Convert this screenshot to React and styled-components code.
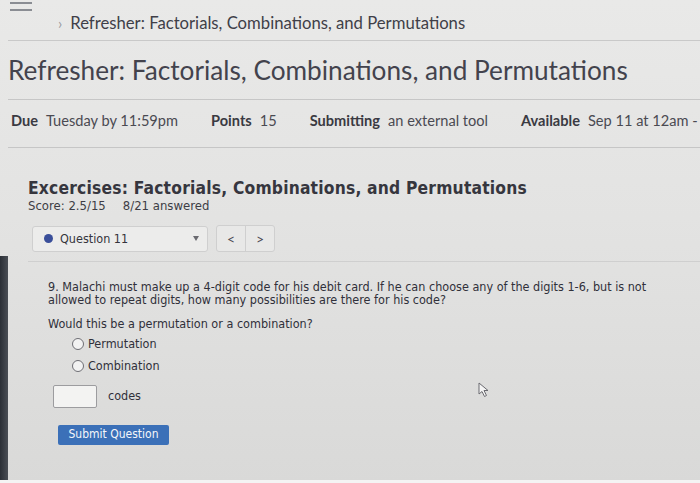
import React from 'react'
import styled, { createGlobalStyle } from 'styled-components'

const GlobalStyle = createGlobalStyle`
  html, body { margin: 0; padding: 0; }
  body {
    width: 700px;
    height: 483px;
    overflow: hidden;
    background: linear-gradient(180deg, #e9e9e8 0%, #e3e3e2 45%, #d9d9d8 100%);
    font-family: Lato, "Open Sans", sans-serif;
    color: #3d3d45;
  }
`

const Page = styled.div`
  position: relative;
  height: 483px;
  overflow: hidden;
`

// dark monitor edge on the left, over the content
const Bezel = styled.div`
  position: absolute;
  left: 0;
  top: 256px;
  bottom: 0;
  width: 8px;
  background: linear-gradient(90deg, #2b2f36, #4a4e55);
`

const BottomEdge = styled.div`
  position: absolute;
  left: 0;
  right: 0;
  bottom: 0;
  height: 3px;
  background: #f4f4f4;
`

const Crumbs = styled.div`
  height: 40px;
  display: flex;
  align-items: center;
  margin-left: 8px;
  border-bottom: 1px solid #c9c9c9;
  position: relative;
`

const Burger = styled.div`
  position: absolute;
  left: 2px;
  top: 2px;
  width: 22px;
  display: flex;
  flex-direction: column;
  gap: 5px;
  span { display: block; height: 2px; background: #8a8d93; }
`

const CrumbText = styled.div`
  margin-left: 50px;
  margin-top: 6px;
  font-size: 16.7px;
  color: #3f3f48;
  display: flex;
  align-items: center;
  gap: 8px;
  b { font-weight: 400; color: #9a9a9e; font-size: 15px; }
`

const Title = styled.h1`
  margin: 0 0 0 8px;
  height: 58px;
  display: flex;
  align-items: center;
  font-size: 26.2px;
  font-weight: 400;
  color: #43434d;
  border-bottom: 1px solid #c6c6c6;
`

const Details = styled.div`
  margin-left: 8px;
  height: 48px;
  display: flex;
  align-items: center;
  gap: 33px;
  font-size: 14.6px;
  border-bottom: 1px solid #c6c6c6;
  padding-left: 3px;
  padding-bottom: 6px;
  box-sizing: border-box;
  white-space: nowrap;
`

const Detail = styled.div`
  display: flex;
  gap: 8px;
  b { font-weight: 700; color: #3a3a42; }
  span { color: #4a4a52; }
`

const Frame = styled.div`
  padding: 30px 0 0 28px;
  font-family: "DejaVu Sans Condensed", "DejaVu Sans", sans-serif;
`

const Heading = styled.h2`
  margin: 0;
  font-size: 17.3px;
  line-height: 20px;
  font-weight: 700;
  color: #36363e;
  letter-spacing: 0.2px;
`

const Score = styled.div`
  font-size: 13px;
  line-height: 15px;
  color: #3d3d45;
  display: flex;
  gap: 17px;
`

const NavRow = styled.div`
  margin-top: 12px;
  display: flex;
  align-items: center;
  gap: 8px;
  padding-left: 4px;
  padding-bottom: 9px;
  border-bottom: 1px solid #cfcfcf;
`

const Select = styled.div`
  width: 176px;
  height: 26px;
  box-sizing: border-box;
  border: 1px solid #cfcfcf;
  border-radius: 3px;
  background: #ececeb;
  display: flex;
  align-items: center;
  padding: 0 8px 0 11px;
  font-size: 12.5px;
  color: #34343c;
`

const Dot = styled.i`
  width: 9px;
  height: 9px;
  border-radius: 50%;
  background: #3a4f9a;
  margin-right: 7px;
`

const Caret = styled.i`
  margin-left: auto;
  width: 0;
  height: 0;
  border-left: 3.5px solid transparent;
  border-right: 3.5px solid transparent;
  border-top: 5px solid #6a6a70;
`

const Nav = styled.div`
  display: flex;
  height: 27px;
  box-sizing: border-box;
  border: 1px solid #cfcfcf;
  border-radius: 3px;
  background: #e8e8e7;
`

const NavBtn = styled.div`
  width: 28px;
  display: flex;
  align-items: center;
  justify-content: center;
  font-family: Lato, sans-serif;
  font-size: 14px;
  color: #4a4a52;
  & + & { border-left: 1px solid #cfcfcf; }
`

const Question = styled.div`
  padding: 19px 0 0 20px;
  font-size: 12.5px;
  color: #30303a;
  line-height: 12.5px;
`

const Para = styled.p`
  margin: 0 0 ${p => p.$gap}px 0;
  width: 610px;
`

const Choices = styled.div`
  margin-left: 24px;
  display: flex;
  flex-direction: column;
  gap: 10px;
`

const Choice = styled.label`
  display: flex;
  align-items: center;
  gap: 4px;
  i {
    width: 10px;
    height: 10px;
    border: 1px solid #6e6e74;
    border-radius: 50%;
    background: #f2f2f2;
  }
`

const AnswerRow = styled.div`
  margin: 12px 0 0 5px;
  display: flex;
  align-items: center;
  gap: 11px;
`

const Box = styled.div`
  width: 44px;
  height: 23px;
  box-sizing: border-box;
  border: 1px solid #9c9c9f;
  border-radius: 2px;
  background: #f3f3f2;
`

const Submit = styled.div`
  margin: 17px 0 0 10px;
  width: 111px;
  height: 20px;
  border-radius: 2px;
  background: #3b70b8;
  color: #f4f6fa;
  font-size: 12px;
  display: flex;
  align-items: center;
  justify-content: center;
`

const Cursor = styled.svg`
  position: absolute;
  left: 478px;
  top: 382px;
`

export default function App() {
  return (
    <Page>
      <GlobalStyle />
      <Crumbs>
        <Burger><span /><span /></Burger>
        <CrumbText><b>›</b>Refresher: Factorials, Combinations, and Permutations</CrumbText>
      </Crumbs>
      <Title>Refresher: Factorials, Combinations, and Permutations</Title>
      <Details>
        <Detail><b>Due</b><span>Tuesday by 11:59pm</span></Detail>
        <Detail><b>Points</b><span>15</span></Detail>
        <Detail><b>Submitting</b><span>an external tool</span></Detail>
        <Detail><b>Available</b><span>Sep 11 at 12am -</span></Detail>
      </Details>
      <Frame>
        <Heading>Excercises: Factorials, Combinations, and Permutations</Heading>
        <Score><span>Score: 2.5/15</span><span>8/21 answered</span></Score>
        <NavRow>
          <Select><Dot />Question 11<Caret /></Select>
          <Nav><NavBtn>&lt;</NavBtn><NavBtn>&gt;</NavBtn></Nav>
        </NavRow>
        <Question>
          <Para $gap={12}>9. Malachi must make up a 4-digit code for his debit card. If he can choose any of the digits 1-6, but is not allowed to repeat digits, how many possibilities are there for his code?</Para>
          <Para $gap={7}>Would this be a permutation or a combination?</Para>
          <Choices>
            <Choice><i />Permutation</Choice>
            <Choice><i />Combination</Choice>
          </Choices>
          <AnswerRow><Box />codes</AnswerRow>
          <Submit>Submit Question</Submit>
        </Question>
      </Frame>
      <Cursor width="12" height="16" viewBox="0 0 12 16">
        <path d="M1 1 L1 12 L4 9.5 L6.5 14.5 L8.5 13.5 L6 8.5 L10 8.5 Z" fill="#f4f4f4" stroke="#6a6a70" strokeWidth="1" strokeLinejoin="round" />
      </Cursor>
      <Bezel />
      <BottomEdge />
    </Page>
  )
}
